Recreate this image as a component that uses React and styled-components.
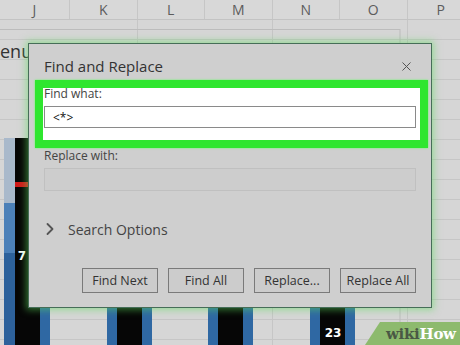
import React from 'react';
import styled, { createGlobalStyle } from 'styled-components';
import { X, ChevronRight } from 'lucide-react';

const GlobalStyle = createGlobalStyle`
    html, body {
        margin: 0;
        padding: 0;
        overflow: hidden;
        background: #d6d6d6;
    }
    body {
        font-family: "Open Sans", "Noto Sans", Arial, sans-serif;
    }
`;

const Sheet = styled.div`
    position: relative;
    width: 460px;
    height: 345px;
    overflow: hidden;
    display: flex;
    flex-direction: column;
    background: #d6d6d6;
`;

const HeaderRow = styled.div`
    display: grid;
    grid-template-columns: 70px repeat(6, 67.5px);
    height: 20px;
    flex-shrink: 0;
    box-sizing: border-box;
    border-bottom: 1px solid #c3c3c3;
    background: #d8d8d8;
`;

const HeaderCell = styled.div`
    display: flex;
    align-items: center;
    justify-content: center;
    border-right: 1px solid #c6c6c6;
    font-size: 14px;
    color: #5c5c5c;
`;

const CellArea = styled.div`
    position: relative;
    flex: 1;
    background-image:
        repeating-linear-gradient(to bottom, transparent 0 19px, #c6c6c6 19px 20px),
        repeating-linear-gradient(to right, transparent 0 66.5px, #c6c6c6 66.5px 67.5px);
    background-position: 0 0, 3px 0;
`;

const ChartLayer = styled.svg`
    position: absolute;
    inset: 0;
    display: block;
`;

const Dialog = styled.section`
    position: absolute;
    left: 28px;
    top: 43px;
    width: 404px;
    height: 265px;
    box-sizing: border-box;
    padding: 0 15px;
    display: flex;
    flex-direction: column;
    background: #cfcfcf;
    border: 1px solid #466e58;
    box-shadow: 0 0 7px 2px rgba(90, 220, 90, 0.5);
`;

const TitleBar = styled.div`
    display: flex;
    align-items: center;
    justify-content: space-between;
    height: 36px;
    padding-top: 8px;
    box-sizing: border-box;
`;

const Title = styled.h2`
    margin: 0;
    font-size: 15px;
    font-weight: 400;
    color: #333;
`;

const CloseButton = styled.span`
    display: flex;
    margin-right: 2px;
    color: #555;
`;

const Highlight = styled.div`
    margin: 0 -12px 0 -9px;
    padding: 0 4px 12px 1px;
    border: 8px solid #2fe62f;
    background: #fff;
    box-shadow: 0 0 2px #6f6;
`;

const Label = styled.div`
    font-size: 12px;
    line-height: ${({ $lh }) => $lh || 12}px;
    margin-top: ${({ $mt }) => $mt || 0}px;
    color: #444;
`;

const TextBox = styled.div`
    box-sizing: border-box;
    height: ${({ $h }) => $h}px;
    margin-top: ${({ $mt }) => $mt}px;
    padding-left: 8px;
    display: flex;
    align-items: center;
    font-size: 12px;
    color: #111;
    background: ${({ $disabled }) => ($disabled ? '#cdcdcd' : '#fff')};
    border: 1px solid ${({ $disabled }) => ($disabled ? '#c0c0c0' : '#8a8a8a')};
`;

const OptionsRow = styled.div`
    display: flex;
    align-items: center;
    height: 18px;
    margin-top: 29px;
    color: #444;
    font-size: 14px;
`;

const Chevron = styled.span`
    display: flex;
    margin: 0 8px 0 -4px;
    color: #555;
`;

const ButtonRow = styled.div`
    display: flex;
    justify-content: flex-end;
    gap: 10px;
    margin-top: 30px;
`;

const Button = styled.button`
    width: 76px;
    height: 25px;
    padding: 0;
    box-sizing: border-box;
    border: 1px solid #7a7a7a;
    background: #cccccc;
    font-family: inherit;
    font-size: 12.5px;
    color: #333;
`;

const Watermark = styled.div`
    position: absolute;
    right: 0;
    bottom: 0;
    width: 95px;
    height: 23px;
    box-sizing: border-box;
    padding-left: 21px;
    display: flex;
    align-items: center;
    clip-path: polygon(15px 0, 100% 0, 100% 100%, 0 100%);
    background: #8dba6d;
    font-family: "DejaVu Serif", "Liberation Serif", serif;
    font-weight: 700;
    font-size: 15px;
    letter-spacing: -0.3px;
`;

const Wiki = styled.span`
    color: #4a5844;
`;

const How = styled.span`
    color: #fff;
`;

const columns = ['J', 'K', 'L', 'M', 'N', 'O', 'P'];

const barGroups = [
    { x: 107, top: 240 },
    { x: 208, top: 240 },
    { x: 310, top: 240, label: '23' },
];

function Chart() {
    return (
        <ChartLayer width="460" height="325" viewBox="0 20 460 325">
            <rect x="-1" y="29.5" width="401" height="340" fill="none" stroke="#bcbcbc" />
            <text x="0" y="58" fontSize="18" fill="#333" fontFamily="Open Sans, sans-serif">
                enu
            </text>
            <rect x="4" y="138" width="11" height="65" fill="#a9b9cb" />
            <rect x="4" y="203" width="11" height="50" fill="#4c80b8" />
            <rect x="4" y="253" width="11" height="92" fill="#2d619b" />
            <rect x="15" y="138" width="25" height="207" fill="#060606" />
            <rect x="15" y="182" width="13" height="5" fill="#d11a1a" />
            <rect x="40" y="138" width="10" height="207" fill="#2f68a3" />
            <text x="22" y="260" textAnchor="middle" fontSize="12" fontWeight="700" fill="#fff" fontFamily="DejaVu Sans, sans-serif">
                7
            </text>
            {barGroups.map((g) => (
                <g key={g.x}>
                    <rect x={g.x} y={g.top} width="10" height={345 - g.top} fill="#2f68a3" />
                    <rect x={g.x + 10} y={g.top} width="25" height={345 - g.top} fill="#060606" />
                    <rect x={g.x + 35} y={g.top} width="10" height={345 - g.top} fill="#2f68a3" />
                    {g.label && (
                        <text x={g.x + 23} y="337" textAnchor="middle" fontSize="12" fontWeight="700" fill="#fff" fontFamily="DejaVu Sans, sans-serif">
                            {g.label}
                        </text>
                    )}
                </g>
            ))}
        </ChartLayer>
    );
}

export default function App() {
    return (
        <Sheet>
            <GlobalStyle />
            <HeaderRow>
                {columns.map((c) => (
                    <HeaderCell key={c}>{c}</HeaderCell>
                ))}
            </HeaderRow>
            <CellArea>
                <Chart />
            </CellArea>
            <Dialog>
                <TitleBar>
                    <Title>Find and Replace</Title>
                    <CloseButton>
                        <X size={15} strokeWidth={1.6} />
                    </CloseButton>
                </TitleBar>
                <Highlight>
                    <Label>Find what:</Label>
                    <TextBox $h={22} $mt={6}>&lt;*&gt;</TextBox>
                </Highlight>
                <Label $lh={14} $mt={1}>Replace with:</Label>
                <TextBox $h={23} $mt={5} $disabled />
                <OptionsRow>
                    <Chevron>
                        <ChevronRight size={20} strokeWidth={2.2} />
                    </Chevron>
                    Search Options
                </OptionsRow>
                <ButtonRow>
                    <Button>Find Next</Button>
                    <Button>Find All</Button>
                    <Button>Replace...</Button>
                    <Button>Replace All</Button>
                </ButtonRow>
            </Dialog>
            <Watermark>
                <Wiki>wiki</Wiki>
                <How>How</How>
            </Watermark>
        </Sheet>
    );
}
